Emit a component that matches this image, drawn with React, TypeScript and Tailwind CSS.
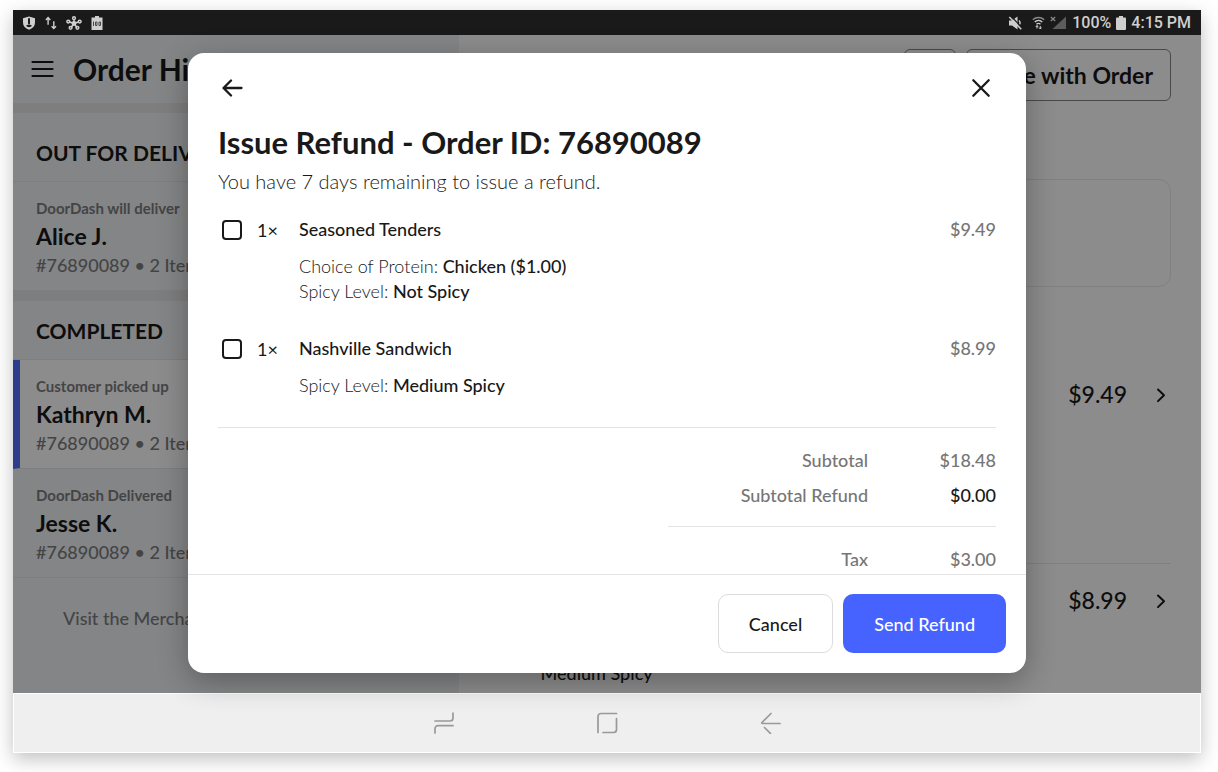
import { useState } from "react";
import type { ReactNode } from "react";

type OrderSummary = {
  status: string;
  customer: string;
  detail: string;
  selected?: boolean;
};

type RefundItem = {
  id: string;
  name: string;
  price: string;
  options: { label: string; value: string }[];
};

const outForDelivery: OrderSummary[] = [
  { status: "DoorDash will deliver", customer: "Alice J.", detail: "#76890089 • 2 Items" },
];

const completed: OrderSummary[] = [
  { status: "Customer picked up", customer: "Kathryn M.", detail: "#76890089 • 2 Items", selected: true },
  { status: "DoorDash Delivered", customer: "Jesse K.", detail: "#76890089 • 2 Items" },
];

const refundItems: RefundItem[] = [
  {
    id: "tenders",
    name: "Seasoned Tenders",
    price: "$9.49",
    options: [
      { label: "Choice of Protein:", value: "Chicken ($1.00)" },
      { label: "Spicy Level:", value: "Not Spicy" },
    ],
  },
  {
    id: "sandwich",
    name: "Nashville Sandwich",
    price: "$8.99",
    options: [{ label: "Spicy Level:", value: "Medium Spicy" }],
  },
];

function StatusBar() {
  return (
    <div className="flex h-[25px] shrink-0 items-center justify-between bg-[#1a1a1a] pr-[10px] pl-[9px] font-['Roboto',sans-serif] text-[16px] leading-[24px] font-medium text-[#cfcfcf]">
      <div className="flex items-center gap-[9px]">
        <svg width="14" height="14" viewBox="0 0 14 14" aria-hidden="true">
          <path d="M7 .5 13 2.300v4.400c0 3.300-2.300 5.700-6 7-3.700-1.300-6-3.700-6-7V2.300z" fill="#cfcfcf" />
          <path d="M7 3v4.500" stroke="#1a1a1a" strokeWidth="2" strokeLinecap="round" />
          <path d="M4 9.800c.8-1.500 5.200-1.500 6 0-.8.900-1.800 1.400-3 1.400s-2.200-.5-3-1.400z" fill="#1a1a1a" />
        </svg>
        <svg width="12" height="14" viewBox="0 0 10 12" fill="none" stroke="#cfcfcf" strokeWidth="1.200" aria-hidden="true">
          <path d="M2.500 7.500V1.500M.6 3.400l1.900-2 1.900 2M7.400 4.500v6M5.500 8.700l1.900 2 1.900-2" />
        </svg>
        <svg width="16" height="14" viewBox="0 0 16 14" fill="none" stroke="#cfcfcf" strokeWidth="1.500" aria-hidden="true">
          <path d="M8 7.500V3M8 7.500 3 5.800M8 7.500l5-1.700M8 7.500 5 11.500M8 7.500l3 4" />
          <circle cx="8" cy="2.200" r="1.400" />
          <circle cx="2.300" cy="5.600" r="1.400" />
          <circle cx="13.700" cy="5.600" r="1.400" />
          <circle cx="4.600" cy="11.800" r="1.400" />
          <circle cx="11.400" cy="11.800" r="1.400" />
          <circle cx="8" cy="7.500" r="1.700" fill="#cfcfcf" />
        </svg>
        <svg width="12" height="14" viewBox="0 0 12 14" aria-hidden="true">
          <path d="M4 0h4v1.500h3.500V14H.5V1.500H4z" fill="#cfcfcf" />
          <path d="M2.500 5.500v4.500M4.500 6h1.500v3.500H4.500zM8 6h1.500v3.500H8z" fill="none" stroke="#4a4a4a" strokeWidth="1" />
        </svg>
      </div>
      <div className="flex items-center">
        <svg className="mr-[9px]" width="15" height="14" viewBox="0 0 15 14" aria-hidden="true">
          <path d="M1 4.500h3L9.500.5v13L4 9.500H1z" fill="#cfcfcf" />
          <path d="M11 4.500c1.300 1.300 1.300 3.300 0 4.600" fill="none" stroke="#cfcfcf" strokeWidth="1.300" />
          <path d="m2.800 0 12 12.300" stroke="#1a1a1a" strokeWidth="1.200" />
          <path d="m1.300 1 12 12.300" stroke="#cfcfcf" strokeWidth="1.500" />
        </svg>
        <svg className="mr-[5px]" width="13" height="14" viewBox="0 0 13 14" fill="none" strokeWidth="1.400" aria-hidden="true">
          <path d="M.8 3.800c3.200-3 8.200-3 11.400 0" stroke="#8a8a8a" />
          <path d="M2.700 6c2.200-2 5.400-2 7.600 0M4.500 8.200c1.200-1 2.800-1 4 0" stroke="#cfcfcf" />
          <path d="M5 9.500v3M3.800 11 5 9.500 6.200 11M8.300 10v3M7.100 11.600l1.200 1.400 1.200-1.400" stroke="#cfcfcf" strokeWidth="1" />
        </svg>
        <svg className="mr-[6px]" width="16" height="14" viewBox="0 0 16 14" aria-hidden="true">
          <path d="M16 .5V13H2.500z" fill="#5c5c5c" />
          <path d="m.8 1 4.400 4M5.200 1 .8 5" stroke="#8a8a8a" strokeWidth="1.200" />
        </svg>
        <span>100%</span>
        <svg className="mx-[5px]" width="10" height="14" viewBox="0 0 10 14" aria-hidden="true">
          <path d="M3 0h4v1.500h2a1 1 0 0 1 1 1V13a1 1 0 0 1-1 1H1a1 1 0 0 1-1-1V2.500a1 1 0 0 1 1-1h2z" fill="#cfcfcf" />
        </svg>
        <span>4:15 PM</span>
      </div>
    </div>
  );
}

function SectionHeading({ children }: { children: ReactNode }) {
  return (
    <h2 className="border-b border-[#e3e5e8] pb-[14px] pl-[23px] text-[21px] leading-[28px] font-bold">{children}</h2>
  );
}

function OrderCard({ order }: { order: OrderSummary }) {
  return (
    <a
      href="#order"
      className={
        order.selected
          ? "block border-b border-l-[7px] border-b-[#e3e5e8] border-l-[#5070ff] bg-white pt-4 pb-[14px] pl-4 whitespace-nowrap"
          : "block border-b border-[#e3e5e8] pt-4 pb-[14px] pl-[23px] whitespace-nowrap"
      }
    >
      <p className="text-[15px] leading-5 font-bold text-[#7c7d7f]">{order.status}</p>
      <p className="text-[23px] leading-9 font-bold">{order.customer}</p>
      <p className="text-[18px] leading-[22px] font-medium text-[#7c7d7f]">{order.detail}</p>
    </a>
  );
}

function Sidebar() {
  return (
    <aside className="w-3/8 shrink-0 overflow-hidden bg-[#f0f2f5]">
      <header className="flex h-[68px] items-center gap-[19px] pl-[18px]">
        <button type="button" aria-label="Menu">
          <svg width="23" height="18" viewBox="0 0 23 18" stroke="#191919" strokeWidth="2.200" strokeLinecap="round" aria-hidden="true">
            <path d="M1.500 2h20M1.500 9h20M1.500 16h20" />
          </svg>
        </button>
        <h1 className="text-[30px] leading-9 font-bold whitespace-nowrap">Order History</h1>
      </header>
      <div className="h-[10px] bg-[#e6e6e6]" />
      <div className="pt-[26px]">
        <SectionHeading>OUT FOR DELIVERY</SectionHeading>
        {outForDelivery.map((order) => (
          <OrderCard key={order.customer} order={order} />
        ))}
      </div>
      <div className="h-[10px] bg-[#e6e6e6]" />
      <div className="pt-[16px]">
        <SectionHeading>COMPLETED</SectionHeading>
        {completed.map((order) => (
          <OrderCard key={order.customer} order={order} />
        ))}
      </div>
      <p className="pt-7 pl-[50px] text-[18px] leading-6 font-medium whitespace-nowrap text-[#7c7d7f]">
        Visit the Merchant Portal for all orders
      </p>
    </aside>
  );
}

function OrderDetail() {
  return (
    <main className="flex-1 overflow-hidden bg-white pr-[30px] pl-[30px]">
      <div className="flex justify-end gap-[10px] pt-[14px]">
        <button type="button" aria-label="Print" className="h-[52px] w-[52px] rounded-md border border-[#858585]" />
        <button type="button" className="h-[52px] rounded-md border border-[#858585] px-[17px] text-[23px] leading-7 font-bold">
          Issue with Order
        </button>
      </div>
      <div className="mt-[78px] h-[108px] rounded-xl border border-[#e9e9e9]" />
      <ul className="mt-[71px]">
        {refundItems.map((item) => (
          <li key={item.id} className="flex h-[206px] items-start border-b border-[#e9e9e9] pt-[21px]">
            <div className="flex-1 pl-[52px]">
              <p className="text-[20px] leading-[30px] font-medium">{item.name}</p>
              {item.options.map((option) => (
                <div key={option.label} className="pt-[19px] text-[18px] leading-[26px]">
                  <p>{option.label}</p>
                  <p className="font-medium">{option.value}</p>
                </div>
              ))}
            </div>
            <span className="text-[23px] leading-[30px] font-medium">{item.price}</span>
            <svg className="mt-2 mr-[5px] ml-[29px]" width="10" height="16" viewBox="0 0 10 16" fill="none" stroke="#191919" strokeWidth="2" strokeLinecap="round" strokeLinejoin="round" aria-hidden="true">
              <path d="m2 2.500 6 5.800-6 5.800" />
            </svg>
          </li>
        ))}
      </ul>
    </main>
  );
}

function RefundRow({ item }: { item: RefundItem }) {
  const [checked, setChecked] = useState(false);
  return (
    <li className="flex items-start text-[18px] leading-6">
      <input
        id={item.id}
        type="checkbox"
        checked={checked}
        onChange={(event) => setChecked(event.target.checked)}
        className="mt-[3px] ml-1 size-5 shrink-0 appearance-none rounded-[4px] border-2 border-[#191919] checked:bg-[#4763ff]"
      />
      <span className="mt-px ml-[15px] w-[42px] shrink-0">1×</span>
      <div className="flex-1">
        <label htmlFor={item.id} className="block font-medium">
          {item.name}
        </label>
        <div className="mt-[13px] leading-[25px]">
          {item.options.map((option) => (
            <p key={option.label}>
              <span className="font-light">{option.label}</span> <span className="font-medium">{option.value}</span>
            </p>
          ))}
        </div>
      </div>
      <span className="font-medium text-[#767676]">{item.price}</span>
    </li>
  );
}

function TotalRow({ label, value, strong }: { label: string; value: string; strong?: boolean }) {
  return (
    <div className="flex justify-end">
      <dt>{label}</dt>
      <dd className={strong ? "w-32 text-right text-[#191919]" : "w-32 text-right"}>{value}</dd>
    </div>
  );
}

function RefundDialog() {
  return (
    <div
      role="dialog"
      aria-label="Issue Refund"
      className="flex w-full max-w-[838px] flex-col overflow-hidden rounded-2xl bg-white shadow-[0_8px_30px_rgba(0,0,0,0.3)]"
    >
      <div className="flex min-h-0 flex-1 flex-col overflow-y-auto px-[30px] [scrollbar-width:none]">
        <div className="mt-5 flex h-[30px] shrink-0 items-center justify-between pr-[5px] pl-1">
          <button type="button" aria-label="Back">
            <svg width="22" height="20" viewBox="0 0 22 20" fill="none" stroke="#191919" strokeWidth="2.300" strokeLinecap="round" strokeLinejoin="round" aria-hidden="true">
              <path d="M19.500 10H1.800M9 2.500 1.500 10 9 17.500" />
            </svg>
          </button>
          <button type="button" aria-label="Close">
            <svg width="20" height="20" viewBox="0 0 20 20" fill="none" stroke="#191919" strokeWidth="2.300" strokeLinecap="round" aria-hidden="true">
              <path d="m2.300 2.300 15.400 15.400M17.700 2.300 2.300 17.700" />
            </svg>
          </button>
        </div>
        <h2 className="mt-[21px] text-[31px] leading-9 font-bold">Issue Refund - Order ID: 76890089</h2>
        <p className="mt-[7px] text-[20px] leading-7 font-light">You have 7 days remaining to issue a refund.</p>
        <ul className="mt-[22px] flex flex-col gap-8 border-b border-[#e3e3e3] pb-[29px]">
          {refundItems.map((item) => (
            <RefundRow key={item.id} item={item} />
          ))}
        </ul>
        <dl className="mt-[15px] self-end text-[18px] leading-[35px] font-medium text-[#767676]">
          <TotalRow label="Subtotal" value="$18.48" />
          <TotalRow label="Subtotal Refund" value="$0.00" strong />
          <div className="mt-[13px] w-[328px] border-t border-[#e3e3e3] pt-[15px]">
            <TotalRow label="Tax" value="$3.00" />
          </div>
        </dl>
      </div>
      <footer className="flex shrink-0 justify-end gap-[10px] border-t border-[#e3e3e3] px-5 pt-[19px] pb-5 text-[18px] leading-6 font-medium">
        <button type="button" className="h-[59px] rounded-[10px] border border-[#dcdcdc] px-[30px]">
          Cancel
        </button>
        <button type="button" className="h-[59px] rounded-[10px] bg-[#4763ff] px-[31px] text-white">
          Send Refund
        </button>
      </footer>
    </div>
  );
}

function NavigationBar() {
  return (
    <nav className="flex h-[60px] shrink-0 items-center justify-center gap-[141px] border border-white bg-[#efefef]">
      <button type="button" aria-label="Recent apps">
        <svg width="22" height="22" viewBox="0 0 22 22" fill="none" stroke="#999" strokeWidth="1.700" strokeLinecap="round" aria-hidden="true">
          <path d="M2 9H17a3 3 0 0 0 3-3V1M2 21v-4.300a3 3 0 0 1 3-3h15" />
        </svg>
      </button>
      <button type="button" aria-label="Home">
        <svg width="22" height="22" viewBox="0 0 22 22" fill="none" stroke="#999" strokeWidth="1.700" strokeLinecap="round" aria-hidden="true">
          <path d="M2 20.500V4.500a3 3 0 0 1 3-3H20.500M20.500 6.500V17.500a3 3 0 0 1-3 3H7" />
        </svg>
      </button>
      <button type="button" aria-label="Go back">
        <svg width="22" height="22" viewBox="0 0 22 22" fill="none" stroke="#999" strokeWidth="1.700" strokeLinecap="round" strokeLinejoin="round" aria-hidden="true">
          <path d="M12 1.500 3 10.500c-.5.600-.3 1 .5 1H21M5.500 15.500l6 6" />
        </svg>
      </button>
    </nav>
  );
}

export default function App() {
  return (
    <div className="flex h-screen flex-col bg-white pt-[10px] pr-[17px] pb-[19px] pl-[13px] font-['Lato',sans-serif] text-[#191919]">
      <div className="flex min-h-0 flex-1 flex-col shadow-[0_6px_18px_rgba(0,0,0,0.25)]">
        <StatusBar />
        <div className="relative flex min-h-0 flex-1">
          <div className="flex min-w-0 flex-1 overflow-hidden">
            <Sidebar />
            <OrderDetail />
          </div>
          <div className="absolute inset-0 flex justify-center bg-black/45 pt-[18px] pb-5">
            <RefundDialog />
          </div>
        </div>
        <NavigationBar />
      </div>
    </div>
  );
}
